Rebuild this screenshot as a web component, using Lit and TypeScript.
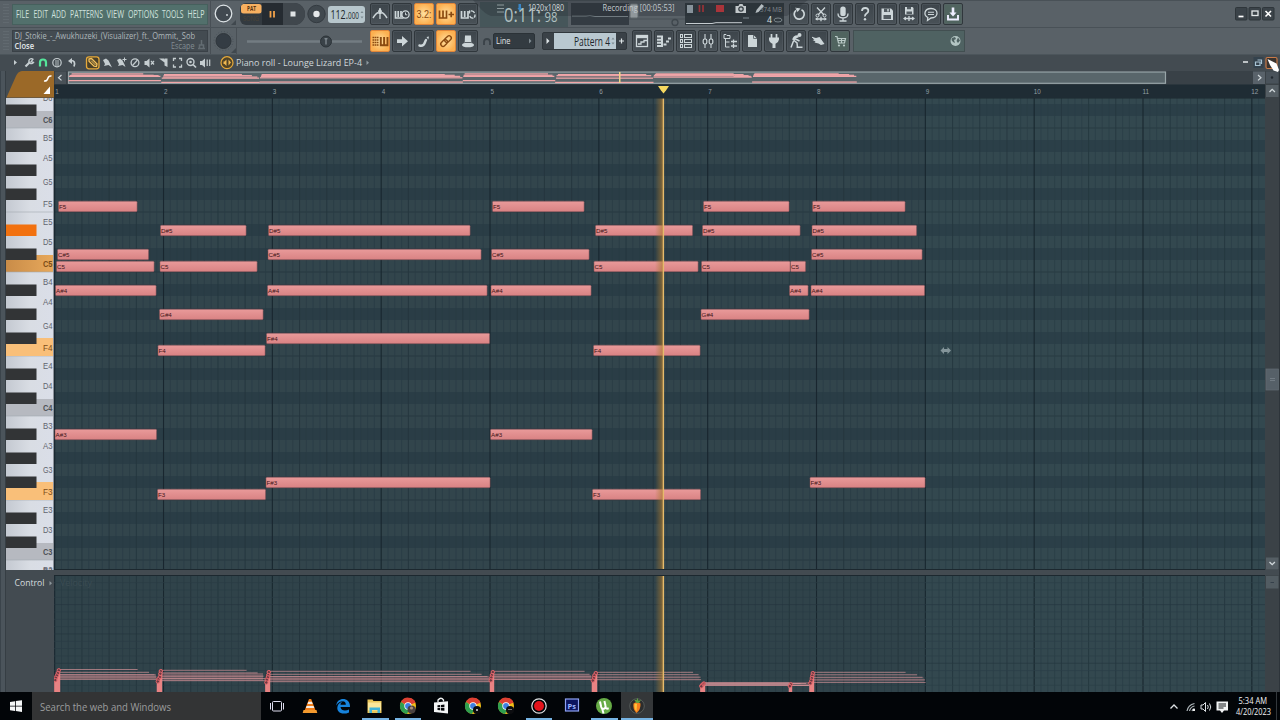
import { LitElement, html, svg, css } from "lit";
import { customElement } from "lit/decorators.js";

const BAR = 108.83;
const ORIGIN = 54.7;

type Note = { n: string; y: number; a: number; b: number; v: number };
const row = (n: string, y: number, spans: number[][]): Note[] => spans.map(([a, b, v]) => ({ n, y, a: a + 0.5, b: b + 0.6, v }));

const NOTES: Note[] = [
  ...row("F5", 206, [[58, 137, 669.5], [492, 584, 671.3], [703, 789, 682.7], [812, 905, 672.3]]),
  ...row("D#5", 230, [[160, 246, 670.3], [268, 470, 671.3], [595, 692.5, 672.3], [702, 800, 683.5], [811.5, 916.5, 674.8]]),
  ...row("C#5", 254, [[57, 148.5, 672.3], [267.5, 481, 674.3], [491, 589, 674.3], [811, 922, 677.3]]),
  ...row("C5", 266, [[56, 154, 674.7], [159.5, 257, 672.9], [593.5, 698, 674.7], [701, 790, 684.5], [790, 805.5, 683.5]]),
  ...row("A#4", 290, [[55, 156, 677], [267, 487, 676.5], [490.5, 591, 676.8], [789, 808, 685.3], [810.5, 924.5, 679.9]]),
  ...row("G#4", 314, [[159, 263, 676.2], [700.5, 809, 685.5]]),
  ...row("F#4", 338, [[266, 489.5, 679]]),
  ...row("F4", 350, [[157.5, 265, 678.5], [593, 700, 677.2]]),
  ...row("A#3", 434, [[54.5, 156.5, 679.3], [490, 592, 679.6]]),
  ...row("F#3", 482, [[265.5, 490, 681.7], [809.5, 925, 682.4]]),
  ...row("F3", 494, [[157, 265.5, 680.7], [592, 700.5, 679.7]]),
];

// Text squeezed or stretched to a known width, as the condensed toolbar faces are.
const fit = (t: string, x: number, y: number, w: number, size: number, fill: string, weight = 400) =>
  svg`<text x=${x} y=${y} font-size=${size} textLength=${w} lengthAdjust="spacingAndGlyphs" fill=${fill} font-weight=${weight}>${t}</text>`;

const W = "#cdd6d9";
const O = "#8a4a10";
const G: Record<string, unknown> = {
  metro: svg`<path d="M3 14q3-5 5.500-5.500M17 14q-3-5-5.500-5.500" fill="none" stroke=${W} stroke-width="1.500"/><path d="M10 4v11" stroke=${W} stroke-width="1.300"/><path d="M8 7l2-3 2 3-.5 3h-3z" fill=${W}/>`,
  wait: svg`<path d="M3.500 7v7h8M6.200 7v6M9 7v6" fill="none" stroke=${W} stroke-width="1.700"/><circle cx="13.500" cy="10.500" r="3.600" fill="#3a4147" stroke=${W} stroke-width="1.300"/><path d="M13.500 8.500v2.300h1.800" fill="none" stroke=${W}/>`,
  count: svg`${fit("3.2:", 2.5, 14, 15, 11, O)}`,
  blend: svg`<path d="M3.500 6.500v7.500h7V6.500M7 6.500v7M12.500 10.500h5.500M15.200 7.800v5.400" fill="none" stroke=${O} stroke-width="1.700"/>`,
  loop: svg`<path d="M3.500 7v7h6.500V7M6.700 7v6" fill="none" stroke=${W} stroke-width="1.700"/><path d="M16.500 9q-1-2.500-3.500-2M11.800 12q1 2.700 3.600 2M12 6.500q-.8 1-.4 3M17 10.500q.2 2-.8 3" fill="none" stroke=${W} stroke-width="1.400"/>`,
  keys: svg`<path d="M2.500 6.500h6.500M2.500 9h6.500M2.500 11.500h6.500M2.500 14h6.500" stroke=${O} stroke-width="1.500" stroke-dasharray="1.600 .5"/><path d="M10.800 6v8.200h6.700V6M14.100 6v8" fill="none" stroke=${O} stroke-width="1.900"/>`,
  arrow: svg`<path d="M5 8.300h5V5l6 5.200-6 5.200v-3.300H5z" fill=${W}/>`,
  slide: svg`<path d="M5.500 14.500c5 1 4.500-2 6.500-5.500" fill="none" stroke=${W} stroke-width="2.500" stroke-linecap="round"/><path d="M12.500 6l2.500-.5-.7 3z" fill=${W}/>`,
  link: svg`<g fill="none" stroke=${O} stroke-width="1.400" transform="rotate(-45 10 10)"><rect x="3.500" y="7.800" width="7.500" height="4.500" rx="2.200"/><rect x="9" y="7.800" width="7.500" height="4.500" rx="2.200"/></g>`,
  hat: svg`<ellipse cx="10" cy="14" rx="6" ry="2.300" fill=${W}/><path d="M7 4.500h6l.4 9H6.600z" fill=${W}/><path d="M6.800 11.500h6.500" stroke="#596167"/>`,
  undo: svg`<path d="M7 6.300a5 5 0 1 0 5.500-.6" fill="none" stroke=${W} stroke-width="1.700"/><path d="M6 3.500l5.500 1-3 3.500z" fill=${W}/>`,
  cut: svg`<path d="M6 3.500l7 7.500M14 3.500l-7 7.500M5 15h10M10 12.800v4.500" stroke=${W} stroke-width="1.300"/><circle cx="6.500" cy="11.500" r="1.500" fill="none" stroke=${W}/><circle cx="13.500" cy="11.500" r="1.500" fill="none" stroke=${W}/><path d="M4 15l2.500-1.700v3.400zM16 15l-2.500-1.700v3.400z" fill=${W}/>`,
  mic: svg`<rect x="7.300" y="2.500" width="5.400" height="9.500" rx="2.600" fill=${W}/><path d="M5 9.500q0 4.500 5 4.500t5-4.500M10 14v3M6.500 17h7" fill="none" stroke=${W} stroke-width="1.300"/>`,
  help: svg`<path d="M7 7q0-3 3.200-3T13.300 7q0 1.500-1.800 2.600T10 12.500" fill="none" stroke=${W} stroke-width="1.800"/><circle cx="10" cy="15.300" r="1.200" fill=${W}/>`,
  save: svg`<path d="M4.500 4.500h9.500l2 2v9.500h-11.500z" fill=${W}/><path d="M7 4.500h6v3.500H7zM6.500 11h7.500v4H6.500z" fill="#525b61"/><path d="M11 5v2.500" stroke=${W} stroke-width="1.500"/>`,
  saveas: svg`<path d="M6 3h7.500l1 1v6.500H6z" fill=${W}/><path d="M8 3h4v2.300H8zM7.500 7.500h5.500v2.500H7.500z" fill="#525b61"/><path d="M5 14.500h10M10 12v5" stroke=${W} stroke-width="1.300"/><path d="M4 14.500l3-2v4zM16 14.500l-3-2v4z" fill=${W}/>`,
  chat: svg`<path d="M10 4.500c8 0 8 9.500 0 9.500l-3.500 2.500.3-3C2 11 3.500 4.500 10 4.500z" fill="none" stroke=${W} stroke-width="1.300"/><path d="M7 8.300h6M7 10.500h6" stroke=${W} stroke-width="1.100"/>`,
  down: svg`<path d="M10 3.500v7" stroke="#eef" stroke-width="2.600"/><path d="M6.500 8.500h7L10 12.500z" fill="#eef"/><path d="M5 11v4.500h10V11" fill="none" stroke="#eef" stroke-width="1.900"/>`,
  playlist: svg`<rect x="4.500" y="4.500" width="11" height="11" fill="none" stroke=${W} stroke-width="1.300"/><path d="M4 6h12" stroke=${W} stroke-width="2.400"/><path d="M6 13h3v-2h3V9.500h3" fill="none" stroke=${W} stroke-width="1.300"/>`,
  roll: svg`<path d="M3 5.500h5v9.500H3M3 8.700h4.500M3 11.800h4.500" fill="none" stroke=${W} stroke-width="2"/><path d="M9.500 13.500h3M12 10.500h3M14 7.500h3" stroke=${W} stroke-width="2.200"/>`,
  rack: svg`<g fill="none" stroke=${W}><rect x="4.500" y="3.500" width="2" height="3"/><rect x="8.500" y="3.500" width="7" height="3"/><rect x="4.500" y="8.500" width="2" height="3"/><rect x="8.500" y="8.500" width="7" height="3"/><rect x="4.500" y="13.500" width="2" height="3"/><rect x="8.500" y="13.500" width="7" height="3"/></g>`,
  mixer: svg`<path d="M7 3v14M13 3v14" stroke=${W} stroke-width="1.100"/><rect x="5.200" y="8" width="3.600" height="5" rx="1.500" fill="#3a4147" stroke=${W} stroke-width="1.200"/><rect x="11.200" y="8" width="3.600" height="5" rx="1.500" fill="#3a4147" stroke=${W} stroke-width="1.200"/>`,
  tree: svg`<path d="M4 3.500h2l1 1h3v3H4zM5.500 8v8h4M5.500 11h4" fill="none" stroke=${W}/><path d="M11 10.500h6M11 15h6M13.500 8.500v4M13.500 13v4" stroke=${W} stroke-width="1.300"/>`,
  file: svg`<path d="M6 4h5.500l3.500 3.500V16H6z" fill=${W}/><path d="M11.500 4v3.500H15" fill="none" stroke="#6a7479"/>`,
  plug: svg`<path d="M7.500 3v4M12.500 3v4" stroke=${W} stroke-width="1.700"/><path d="M5 6.500h10v2q-.3 3-3.500 4.300v4.200h-3v-4.200Q5.300 11.500 5 8.500z" fill=${W}/>`,
  dig: svg`<circle cx="13.500" cy="4" r="2" fill=${W}/><path d="M12.500 5.500Q8 5 7.500 9" fill="none" stroke=${W} stroke-width="2.600"/><path d="M7.500 9l3.500 3 .5 4.500M7.500 10L5 16.500M8.500 7.500l5 2.500M10.500 16.300h6" fill="none" stroke=${W} stroke-width="1.500"/>`,
  tap: svg`<path d="M4 6l4 1 3.500-1 1.500 2 3.500 5-3.500 1-2.500-1.500-4-1 1-1L4.500 9l2-.5z" fill=${W}/><path d="M4 6l9 7" stroke=${W}/>`,
  cart: svg`<path d="M5 5.500h2l1.500 6.500h6l1-4.500H7.500M8 9.500h7M11.500 7v5" fill="none" stroke="#b9c9c6" stroke-width="1.200"/><circle cx="9" cy="14.500" r="1.100" fill="#b9c9c6"/><circle cx="14" cy="14.500" r="1.100" fill="#b9c9c6"/>`,
};

const btn = (k: string, mod = "") => html`<button class="btn ${mod}"><svg viewBox="0 0 20 20" width="20" height="20">${G[k]}</svg></button>`;

const chrome = (badge: unknown) => svg`<g>
  <circle cx="14" cy="14" r="8" fill="#f2c018"/><path d="M14 14L7 10A8 8 0 0 1 21.500 10.500z" fill="#dd4033"/><path d="M14 6a8 8 0 0 1 7.500 4.700H14z" fill="#dd4033"/>
  <path d="M7 10a8 8 0 0 0 6 12l3-6z" fill="#2f9e4f"/><circle cx="14" cy="14" r="3.700" fill="#fff"/><circle cx="14" cy="14" r="2.900" fill="#3f7fe0"/>${badge}</g>`;

const TASKS: { icon: unknown; open?: boolean; active?: boolean }[] = [
  { icon: svg`<rect x="9.500" y="9.500" width="9" height="9.500" rx="1" fill="none" stroke="#dde"/><path d="M7.500 11v6.500M20.500 11v6.500" stroke="#dde"/>` },
  { icon: svg`<path d="M13 7h2.200l4.200 11H8.800z" fill="#f07b16"/><path d="M12.300 9.800h3.600l.8 2.300h-5.200zM10.600 14h7l.7 2H9.900z" fill="#f4ede4"/><path d="M7.500 18h13l.8 3H6.700z" fill="#f39a2e"/>` },
  { icon: svg`<path d="M7.300 13.500C8 4.500 21.500 5 21 15H11.500c.3 4 5.500 4.300 8.500 2.400v3C13 23.500 7 20 8.500 14.500 9.500 11 12 10 14 9.500c-2 1-2.500 2-2.500 3.200h5.300C17 8 10.500 8 7.300 13.500z" fill="#1683dc"/>` },
  { icon: svg`<path d="M6.500 7.500h5l1 1.500h8v12h-14z" fill="#e9c65a"/><path d="M7 10.500h13v8H7z" fill="#fbe79a"/><path d="M8.500 21v-5.500h10.500V21h-2.500v-3h-5.500v3z" fill="#3fb3d8"/>`, open: true },
  { icon: chrome(svg`<circle cx="17.500" cy="17.500" r="4" fill="#4a4240"/><circle cx="17.500" cy="16" r="1.600" fill="#a98e7e"/>`), open: true },
  { icon: svg`<path d="M7 10.500l14-1.200v12.200L7 20z" fill="#f3f5f6"/><path d="M11 10V8q3-3.500 5.500 0v1.500" fill="none" stroke="#f3f5f6" stroke-width="1.300"/><path d="M10.500 13.200l2.700-.2v2.300h-2.700zM14 12.900l3.400-.3v2.700H14zM10.500 16h2.700v2.200l-2.700-.2zM14 16h3.400v2.700l-3.400-.3z" fill="#05070a"/>` },
  { icon: chrome(svg`<circle cx="18" cy="18" r="4" fill="#080a0c"/><circle cx="18" cy="18" r="1" fill="#ddd"/>`) },
  { icon: chrome(svg`<circle cx="18" cy="18" r="4" fill="#0c0d10"/><path d="M16 17.500h4" stroke="#777"/>`) },
  { icon: svg`<circle cx="14" cy="14" r="7.200" fill="none" stroke="#dfe2e4" stroke-width="1.200"/><circle cx="14" cy="14" r="5" fill="#e3131b"/>`, open: true },
  { icon: svg`<rect x="7.500" y="7" width="13" height="12" fill="#0c1560" stroke="#8ea2f2" stroke-width="1.200"/><text x="9.500" y="16.500" font-size="7.500" font-weight="700" fill="#9db8ff">Ps</text>` },
  { icon: svg`<circle cx="14" cy="14" r="8" fill="#66ab46"/><path d="M10 9.500l1.200 5.500q.8 2.500 3.300 1.500 1.600-1 .9-3.200l-1-4.300M15.500 15.500q1 1.700 3.200.8M12 16l1.500 5.500" fill="none" stroke="#fff" stroke-width="2"/>`, open: true },
  { icon: svg`<circle cx="14" cy="14" r="7.300" fill="#2b2d2d" stroke="#555b59"/><path d="M10.500 11.500q3.500-2.500 7 0 .5 6-4 9.500-4-4-3-9.500z" fill="#f5801d"/><path d="M11.500 12q1.500-1 2.500 0l-.5 7.500q-2.500-3-2-7.500z" fill="#ffc23a"/><path d="M13.500 11l-2.500-3.500 2.500.7 1-2.500 1 3 2.500-.7-2 3z" fill="#5da143"/>`, open: true, active: true },
];

@customElement("app-root")
export class AppRoot extends LitElement {
  static styles = css`
    :host { display: block; width: 1280px; height: 720px; overflow: hidden; font-family: "Open Sans", "Noto Sans", sans-serif; color: #d9e0e3; background: #434b51; }
    * { box-sizing: border-box; }
    svg { display: block; flex: none; }
    text { white-space: pre; }
    .app { display: flex; flex-direction: column; width: 1280px; height: 720px; position: relative; }
    .bar { display: flex; align-items: center; height: 27px; background: #596167; border-top: 1px solid #495157; flex: none; }
    .grip { width: 12px; height: 20px; flex: none; background: repeating-linear-gradient(#697278 0 1px, transparent 1px 3px) 3px 0 / 6px 100% no-repeat; opacity: .5; }
    .menu { width: 196px; height: 21px; background: #52706c; border: 1px solid #46605d; flex: none; }
    .hint { width: 196px; height: 22px; background: #434b51; border: 1px solid #3a4147; flex: none; }
    .bar .menu svg, .bar .hint svg { overflow: visible; }
    .knobbox { width: 27px; height: 26px; margin-left: 2px; border-left: 1px solid #484f55; border-right: 1px solid #484f55; flex: none; }
    .knobbox.open { border-right-color: transparent; }
    .transport { display: flex; width: 65px; height: 22px; margin-left: 3px; border-radius: 6px 11px 11px 6px; background: #333a40; overflow: hidden; flex: none; }
    .rec { width: 22px; flex: none; margin-left: 1px; }
    .tempo { width: 37px; height: 17px; border-radius: 3px; background: #b7c6cc; flex: none; }
    .btns { display: flex; gap: 2px; flex: none; margin-left: 5px; }
    .btns.second { margin-left: 3px; }
    .btn { width: 20px; height: 22px; padding: 0; border: 1px solid #30373c; border-radius: 2px; background: linear-gradient(#3d454b, #495157); display: flex; align-items: center; justify-content: center; box-shadow: 0 0 0 1px #59626866 inset; }
    .btn.on { background: radial-gradient(#ffe0a0, #fcb050 75%); border-color: #e0863a; box-shadow: none; }
    .btn.teal { background: #50645f; }
    .time { width: 88px; height: 25px; background: #46565a; flex: none; margin-left: 2px; }
    .scope { width: 58px; height: 22px; background: #343c43; flex: none; margin-left: 3px; }
    .cpu { width: 99px; height: 22px; background: #30383e; flex: none; }
    .win { margin-left: auto; margin-right: 5px; }
    .slider { flex: none; margin-left: 8px; }
    .snap { flex: none; margin-left: 2px; }
    .pat { display: flex; width: 85px; height: 18px; margin-left: 5px; background: #3a4147; border: 1px solid #30373c; border-radius: 2px; flex: none; }
    .news { width: 112px; height: 22px; margin-left: 3px; background: #4f6262; border: 1px solid #424f51; flex: none; }
    .overlay { position: absolute; left: 470px; top: 0; }
    .pointer { position: absolute; left: 1264px; top: 56px; }
    .title { display: flex; height: 17px; flex: none; background: #434b51; }
    .editor { display: flex; height: 621px; flex: none; }
    .edge { width: 6px; flex: none; background: #4b545b; border-right: 1px solid #363e44; border-left: 1px solid #3b444b; }
    .side { width: 48px; flex: none; display: flex; flex-direction: column; }
    .canvas { width: 1211px; flex: none; display: flex; flex-direction: column; }
    .rail { width: 15px; flex: none; display: flex; flex-direction: column; }
    .split { height: 5px; background: #434b51; flex: none; }
    .control { height: 117px; background: #434b51; flex: none; }
    .taskbar { display: flex; height: 28px; background: #020508; flex: none; }
    .start { width: 32px; display: flex; align-items: center; justify-content: center; }
    .search { width: 229px; background: #333435; }
    .task { width: 32.700px; display: flex; justify-content: center; position: relative; }
    .task.active { background: #343739; }
    .task.open::after { content: ""; position: absolute; left: 3px; right: 3px; bottom: 0; height: 2px; background: #76b4e4; }
    .task.active::after { left: 0; right: 0; }
    .tray { margin-left: auto; }
  `;

  private topBar() {
    const menus: [string, number, number][] = [["FILE", 3, 13], ["EDIT", 20.5, 14.500], ["ADD", 38.5, 14.500], ["PATTERNS", 57, 33], ["VIEW", 93.5, 17.500], ["OPTIONS", 115, 30.500], ["TOOLS", 149, 21.500], ["HELP", 174.5, 17]];
    return html`<div class="bar">
      <div class="grip"></div>
      <div class="menu"><svg width="194" height="19">${menus.map(([t, x, w]) => fit(t, x, 13.300, w, 11.500, "#cfe0dc"))}</svg></div>
      <div class="knobbox open"><svg width="26" height="26"><circle cx="12.500" cy="12.500" r="8.300" fill="#414950" stroke="#dce2e5" stroke-width="1.300"/><circle cx="16" cy="14" r=".9" fill="#dce2e5"/><path d="M25 19v5h-5z" fill="#40484e"/></svg></div>
      <div class="transport"><svg width="65" height="22">
        <rect x="1" y="1" width="20.500" height="9.500" rx="2.500" fill="#f8b060"/>${fit("PAT", 7, 8.2, 9, 6.500, "#5b3410", 700)}${fit("SONG", 3, 18, 16, 7, "#4b4438")}
        <rect x="22" width="21" height="22" fill="#252b31"/><path d="M30.500 8v6.500M34 8v6.500" stroke="#f3a24a" stroke-width="1.800"/><rect x="43" width="22" height="22" fill="#40474d"/><rect x="50.500" y="8.500" width="5" height="5" fill="#dfe3e5"/></svg></div>
      <svg class="rec" width="22" height="24"><circle cx="10.500" cy="12" r="8.700" fill="#40484e" stroke="#343b41"/><circle cx="10.500" cy="12" r="3.200" fill="#e5e8ea"/></svg>
      <div class="tempo"><svg width="37" height="17">${fit("112.", 2.5, 13, 17.5, 12, "#20262b")}${fit("000", 20, 13, 11, 8.500, "#20262b")}<path d="M32.500 7l1.500-2 1.500 2zM32.500 10.500l1.500 2 1.500-2z" fill="#7c8a90"/></svg></div>
      <div class="btns">${btn("metro")}${btn("wait")}${btn("count", "on")}${btn("blend", "on")}${btn("loop")}</div>
      <div class="time"></div>
      <div class="scope"><svg width="58" height="22"><path d="M1 13h14l4-.5 5 1h33" stroke="#707a80" fill="none"/></svg></div>
      <svg width="56" height="26"><path d="M0 18h56" stroke="#4a5258"/><circle cx="46" cy="21.500" r="3" fill="none" stroke="#3f474d" stroke-width="1.300"/></svg>
      <div class="cpu"><svg width="99" height="22"><path d="M1 20.500h26l4-.8h26" stroke="#c5ccd0" fill="none"/>${fit("374 MB", 75, 8.500, 22, 7.5, "#a9b2b6")}${fit("4", 82, 20, 5, 8.5, "#d9e0e3")}<path d="M58 15h6" stroke="#566067" stroke-width="2"/><ellipse cx="93" cy="17" rx="4" ry="2" fill="none" stroke="#7a858a"/></svg></div>
      <div class="btns">${["undo", "cut", "mic", "help", "save", "saveas", "chat"].map((k) => btn(k))}${btn("down", "teal")}</div>
      <div class="win"><svg width="40" height="14"><g fill="#3b4349" stroke="#2f363b"><rect x=".5" y=".5" width="11.500" height="12.500" rx="1"/><rect x="14" y=".5" width="11.500" height="12.500" rx="1"/><rect x="27.500" y=".5" width="11.500" height="12.500" rx="1"/></g><path d="M3.500 9.500h5" stroke="#fff" stroke-width="1.700"/><rect x="17" y="4" width="6" height="4.500" fill="none" stroke="#e4e8ea" stroke-width="1.300"/><path d="M30.500 4l5.500 5.500M36 4l-5.500 5.500" stroke="#fff" stroke-width="1.600"/></svg></div>
    </div>`;
  }

  private secondBar() {
    return html`<div class="bar">
      <div class="grip"></div>
      <div class="hint"><svg width="194" height="21">${fit("DJ_Stokie_-_Awukhuzeki_(Visualizer)_ft._Ommit,_Sob", 1.5, 7.500, 180.500, 8.3, "#aeb7bb")}${fit("Close", 1.5, 17.5, 19.5, 8.3, "#e4e9eb", 600)}${fit("Escape", 158, 17.5, 23.5, 8.3, "#828c91")}<path d="M185 17.500h7M186.500 17v-3h4v3M188.500 14V9" stroke="#636c72" fill="none" stroke-width="1.500"/></svg></div>
      <div class="knobbox"><svg width="26" height="26"><circle cx="12.500" cy="13" r="9.500" fill="none" stroke="#49525a" stroke-dasharray="1 2"/><circle cx="12.500" cy="13" r="7.500" fill="#343c44" stroke="#2f363c"/><path d="M25 20v5h-5z" fill="#40484e"/></svg></div>
      <svg class="slider" width="122" height="26"><path d="M2 13.500h115" stroke="#737c82" stroke-width="2.500"/><circle cx="81" cy="13.500" r="5.500" fill="#3a4248" stroke="#2c3338"/><path d="M79.500 10.700h3M81 10.500v6" stroke="#929ca2" stroke-width="1.100"/></svg>
      <div class="btns second">${btn("keys", "on")}${btn("arrow")}${btn("slide")}${btn("link", "on")}${btn("hat")}</div>
      <svg class="snap" width="57" height="24"><path d="M4 16v-3a3 3 0 0 1 6 0v3" fill="none" stroke="#3a4248" stroke-width="1.800"/><rect x="13.500" y="4.500" width="41" height="15" rx="1.500" fill="#333b41" stroke="#2b3237"/>${fit("Line", 16, 15, 14.5, 9, "#e0e5e7")}<path d="M49 9.500l2.500 2.500-2.500 2.500z" fill="#7f8a90"/></svg>
      <div class="pat"><svg width="83" height="16"><rect x="11" width="62" height="16" fill="#b9c8d0"/><path d="M3.500 5l3 3-3 3z" fill="#dfe5e8"/>${fit("Pattern 4", 31, 12.500, 36, 12, "#20262b")}<path d="M68.500 6.500l1.500-2 1.500 2zM68.500 9.500l1.500 2 1.500-2z" fill="#7c8a90"/><path d="M76 8h5M78.500 5.500v5" stroke="#dfe5e8" stroke-width="1.200"/></svg></div>
      <div class="btns">${["playlist", "roll", "rack", "mixer", "tree", "file", "plug", "dig", "tap"].map((k) => btn(k))}${btn("cart", "teal")}</div>
      <div class="news"><svg width="110" height="20"><circle cx="101.500" cy="10" r="5" fill="#b3c5c3"/><path d="M98 7l3-1 1 2-2 1 1 3-2-1-1.500-2zM104 6.500l2 3-2 2.500-1.500-2z" fill="#4f6262"/></svg></div>
    </div>`;
  }

  private overlay() {
    return html`<svg class="overlay" width="340" height="26">
      <path d="M3 0H338L326 9Q323 12 317 16H21Q14 13 10 8z" fill="#242c32" opacity=".32"/>
      <path d="M27 5h7M27 8.500h7M27 12h7" stroke="#8e9a9d"/><path d="M48.500 4h2.500v4h-2.500zM47.500 8h5l-2.500 4z" fill="#3985c5"/>
      ${fit("0:11:", 34, 21.5, 37, 20, "#b0c0c1")}${fit("98", 74.500, 21.500, 13, 14, "#b0c0c1")}
      ${fit("1920x1080", 58, 10.500, 36, 8.500, "#d5dadd")}
      <rect x="160" y="4" width="8" height="14" rx="1.500" fill="#90979b" stroke="#5e666b"/>
      ${fit("Recording [00:05:53]", 132.5, 11, 72, 8.500, "#c2c8cc")}
      <rect x="217" y="5" width="6" height="8" fill="#87929a"/><path d="M229.500 5v7M233 5v7" stroke="#993338" stroke-width="1.700"/><rect x="246" y="5" width="8" height="7" fill="#a9343a"/>
      <path d="M265.500 6h3l1-2h3l1 2h2.500v7h-10.500z" fill="#c2c8cb"/><circle cx="271" cy="9" r="2.200" fill="#b7bec2" stroke="#333b41" stroke-width="1.200"/><path d="M285.500 13l1-3 5-6 2.500 2-5.500 6z" fill="#b4bcc0"/>
    </svg>`;
  }

  private titleBar() {
    const s = "#c5cdd0";
    return html`<div class="title"><svg width="1280" height="17" viewBox="0 54 1280 17">
      <path d="M0 54.500h1280" stroke="#4c555b"/><path d="M14 60l3 2.500-3 2.500z" fill=${s}/>
      <path d="M25.500 66.500l4.500-4.500" stroke=${s} stroke-width="2.200"/><path d="M33 59.200a2.500 2.500 0 1 0 .5 3.200l-2.300-.8z" fill="none" stroke=${s} stroke-width="1.400"/>
      <path d="M40 66.500v-4a3 3 0 0 1 6 0v4" fill="none" stroke="#55e59b" stroke-width="2.200"/>
      <circle cx="57" cy="62.700" r="4.200" fill="none" stroke=${s} stroke-width="1.200"/><path d="M55 61h4M55 63h4M55 65h4" stroke=${s} stroke-width=".9"/>
      <path d="M71 60.500q5 0 3 6" fill="none" stroke=${s} stroke-width="1.700"/><path d="M68 61l4-3v6z" fill=${s}/>
      <rect x="86.500" y="56.800" width="12.500" height="12" rx="2.500" fill="#4a4028" stroke="#e6a93a" stroke-width="1.300"/><path d="M89 59l2.500-.5 5.500 5.500-.5 2.500-2.500-.3-5-5z" fill="none" stroke="#f4c05a" stroke-width="1.300"/><path d="M91 60.500l4.500 4.500" stroke="#f4c05a"/>
      <path d="M103 60l3-1.500 2.500 2 2 4 1.500 3-3.500-2.500-4.500 1 1-2z" fill=${s}/>
      <path d="M117 60l3-1.500 2.500 2 2 4 1 2.500-3-2-4.500 1 1-2zM124 57.500h1v1.500h1.500v1H125v1.500h-1V60h-1.500v-1h1.500z" fill=${s}/>
      <circle cx="135" cy="62.700" r="3.900" fill="none" stroke=${s} stroke-width="1.300"/><path d="M132.500 65.500l5-5.500" stroke=${s} stroke-width="1.200"/>
      <path d="M144.500 61h2l3-2.500v9l-3-2.500h-2z" fill=${s}/><path d="M151 61l3 3.500M154 61l-3 3.500" stroke=${s} stroke-width="1.200"/>
      <path d="M159 58.500h5l1.500 4-1-1v-3h3v8.500l-3-1.500v-3z" fill=${s}/>
      <path d="M173.500 61v-2.500h2.500M179 58.500h2.500V61M181.500 64.500V67H179M176 67h-2.500v-2.500" fill="none" stroke=${s} stroke-width="1.300"/>
      <circle cx="190.500" cy="62" r="3.500" fill="none" stroke=${s} stroke-width="1.400"/><path d="M193 64.500l3 3" stroke=${s} stroke-width="1.700"/><circle cx="190.500" cy="62" r="1.300" fill=${s}/>
      <path d="M200 61h2l3-2.500v9l-3-2.500h-2z" fill=${s}/><path d="M207.200 59.500v6.500M209.700 59.500v6.500" stroke=${s} stroke-width="1.200"/>
      <circle cx="227" cy="62.700" r="6" fill="#514325" stroke="#e6a93a" stroke-width="1.200"/><path d="M223.500 61.500h1l2-2v6.500l-2-2h-1zM228.500 59.500l2.500 3-2.500 3z" fill="#f0b850"/>
      ${fit("Piano roll - Lounge Lizard EP-4", 236, 66, 126, 9.8, "#d0d7da")}<path d="M366.500 60.500l2.500 2.200-2.500 2.200z" fill="#8f9aa0"/>
      <path d="M1243 62h5" stroke="#e6eaec" stroke-width="1.500"/><rect x="1253.500" y="57" width="10" height="11" fill="#34424d"/><path d="M1257.500 60h4v4M1255.500 62h4.500v3.500h-4.500z" fill="none" stroke="#a9c4d4" stroke-width="1.200"/>
      <rect x="1266" y="57.500" width="11" height="11" rx="1.500" fill="#3a3430" stroke="#c97a48" stroke-width="1.200"/></svg></div>`;
  }

  private keyboard() {
    const parts: unknown[] = [];
    const hi: Record<string, string> = { C5: "url(#kc)", F4: "#f9bf79", F3: "#f9bf79" };
    const labels: [string, number][] = [["B", 10], ["A", 30], ["G", 54], ["F", 76], ["E", 94], ["D", 114], ["C", 136]];
    for (let o = 0; o < 5; o++) {
      // Each octave spans 144px, the B row on top and the C row at the bottom.
      const b = 128 + 144 * (o - 1);
      const name = 6 - o;
      const c = b + 132;
      parts.push(svg`<path d="M6 ${c}H36V${c - 5}H54V${c + 12}H6z" fill=${hi[`C${name}`] ?? "#b6b9c0"}/><path d="M6 ${c + 12}H54M6 ${b + 84}H54" stroke="#a3a7ae" stroke-width=".6"/>`);
      const fk = `F${name}`;
      if (hi[fk]) parts.push(svg`<path d="M6 ${b + 72}H36V${b + 66}H54V${b + 84}H6z" fill=${hi[fk]}/>`);
      for (const k of [1, 3, 5, 8, 10]) {
        const hot = name === 5 && k === 8;
        parts.push(svg`<rect x="6" y=${b + 12 * k + 0.5} width="30.500" height="11.500" fill=${hot ? "#f2710f" : "#323436"}/>`);
      }
      for (const [l, d] of labels) {
        const isC = l === "C";
        parts.push(fit(`${l}${name}`, 43, b + d + 3, 9.500, 8.800, hi[`${l}${name}`] ? "#7c4c17" : isC ? "#4c5056" : "#61656e", isC ? 700 : 400));
      }
    }
    parts.push(fit("B2", 43, 573.5, 9.5, 8.800, "#61656e"));
    return html`<svg width="48" height="472" viewBox="6 98 48 472" font-family="Liberation Sans, sans-serif">
      <defs><linearGradient id="kc"><stop offset="0" stop-color="#c98c48"/><stop offset="1" stop-color="#e8a95c"/></linearGradient>
      <linearGradient id="kw"><stop offset="0" stop-color="#c4c9d1"/><stop offset=".5" stop-color="#d9dde4"/><stop offset="1" stop-color="#dadee8"/></linearGradient></defs>
      <rect x="6" y="98" width="48" height="472" fill="url(#kw)"/>${parts}<path d="M53.500 98v472" stroke="#8c929b"/></svg>`;
  }

  private verticals(y1: number, y2: number) {
    const out: unknown[] = [];
    for (let i = 0; i < 178; i++) {
      const x = ORIGIN + (i * BAR) / 16;
      const [c, w] = i % 16 === 0 ? ["#18272f", 1.1] : i % 4 === 0 ? ["#253840", 0.9] : ["#2a3e46", 0.7];
      out.push(svg`<path d="M${x} ${y1}V${y2}" stroke=${c} stroke-width=${w}/>`);
    }
    return out;
  }

  private playhead(y: number, h: number) {
    return svg`<defs><linearGradient id="ph"><stop offset="0" stop-color="#a87a30" stop-opacity="0"/><stop offset="1" stop-color="#ab7a30" stop-opacity=".7"/></linearGradient></defs>
      <rect x="655" y=${y} width="8" height=${h} fill="url(#ph)"/><rect x="662.700" y=${y} width="1.400" height=${h} fill="#e6bb6c"/>`;
  }

  private grid() {
    const rows: unknown[] = [];
    for (let y = 92; y < 570; y += 12) {
      const k = ((((y - 128) / 12) % 12) + 12) % 12;
      if ([1, 3, 5, 8, 10].includes(k)) rows.push(svg`<rect x="54" y=${y} width="1211" height="12" fill="#2b3f48"/>`);
      if (k === 0 || k === 7) rows.push(svg`<path d="M54 ${y}H1265" stroke="#273840" stroke-width=".8"/>`);
    }
    return html`<svg width="1211" height="472" viewBox="54 98 1211 472">
      <defs><linearGradient id="nt" x2="0" y2="1"><stop offset="0" stop-color="#e99a9a"/><stop offset="1" stop-color="#d98283"/></linearGradient></defs>
      <rect x="54" y="98" width="1211" height="472" fill="#33484f"/>${rows}${this.verticals(98, 570)}
      <rect x="54" y="98" width="871" height="472" fill="#222a33" opacity=".08"/>
      ${NOTES.map((n) => svg`<rect x=${n.a} y=${n.y - 4.8} width=${n.b - n.a - 0.5} height="10.500" rx="1" fill="url(#nt)" stroke="#7c4c52" stroke-width=".5"/><text x=${n.a + 0.6} y=${n.y + 2.8} font-size="6.200" font-family="Liberation Sans, sans-serif" fill="#3f1518">${n.n}</text>`)}
      ${this.playhead(98, 472)}
      <path d="M940.500 350.500l3.500-3.500v2h3.500v-2l3.500 3.500-3.500 3.500v-2H944v2z" fill="#84959a"/>
      <path d="M54 98H1265M54 569.500H1265" stroke="#1c282f"/></svg>`;
  }

  private velocity() {
    const h: unknown[] = [];
    for (let i = 0; i < 16; i++) h.push(svg`<path d="M54 ${575.3 + i * 7.33}H1265" stroke=${i % 4 === 0 ? "#253840" : "#2b3f47"} stroke-width=".7"/>`);
    const bands = [[58, 156, 674, 679.5], [160, 263, 673, 680.7], [268, 489, 676, 681.5], [492, 591, 675, 680], [595, 699, 676, 679.5], [703, 809, 682, 686], [812, 924, 677, 682]];
    return html`<svg width="1211" height="117" viewBox="54 575 1211 117">
      <rect x="54" y="575" width="1211" height="117" fill="#33484f"/>${this.verticals(575, 692)}${h}
      <rect x="54" y="575" width="871" height="117" fill="#222a33" opacity=".14"/>
      ${fit("Velocity", 60, 586, 32, 9.5, "#3b4c53")}
      ${bands.map(([a, b, t, u], i) => svg`<rect x=${a} y=${t} width=${b - a} height=${u - t} fill="#d98a90" opacity=${i < 4 || i === 5 ? 0.35 : 0.12}/>`)}
      ${NOTES.map((n) => svg`<path d="M${n.a} ${n.v}H${n.b}" stroke="#d9959b" stroke-width=".8" opacity=".85"/>`)}
      ${NOTES.map((n) => svg`<rect x=${n.a - 0.8} y=${n.v + 2} width="2.500" height=${690 - n.v} fill="#e98384"/>`)}
      ${NOTES.map((n) => svg`<circle cx=${n.a + 0.3} cy=${n.v + 0.8} r="1.700" fill="#6b3a42" stroke="#e4656b" stroke-width="1"/>`)}
      ${this.playhead(575, 117)}<path d="M54 575.500H1265" stroke="#1c282f"/></svg>`;
  }

  private head() {
    const mx = (x: number) => 68 + (x - 54.5) * 0.9055;
    return html`<svg width="1211" height="27" viewBox="54 71 1211 27">
      <rect x="54" y="71" width="1211" height="14" fill="#394147"/><rect x="55" y="71.500" width="11" height="12.500" fill="#495157"/><path d="M61.500 75l-3 2.700 3 2.700" fill="none" stroke="#d1d8db" stroke-width="1.200"/>
      <rect x="68.500" y="72" width="1097" height="11.300" fill="#59666b" stroke="#98a5a8" stroke-width="1.200"/>
      ${NOTES.map((n) => svg`<rect x=${mx(n.a)} y=${67.2 + n.y * 0.0295} width=${mx(n.b) - mx(n.a)} height="1.250" fill="#f0a5a8"/>`)}
      <rect x="619" y="72" width="1.500" height="11" fill="#efd38a"/>
      <rect x="1253" y="71.500" width="12" height="12.500" fill="#59626a"/><path d="M1258 75l3 2.700-3 2.700" fill="none" stroke="#d1d8db" stroke-width="1.200"/>
      <rect x="54" y="84.500" width="1211" height="14" fill="#1f2c34"/>
      ${Array.from({ length: 12 }, (_, i) => svg`<text x=${ORIGIN + i * BAR + (i > 8 ? -0.5 : 0.5)} y="94" font-size="6.300" font-family="Liberation Sans, sans-serif" fill="#939fa4">${i + 1}</text>`)}
      <path d="M658 86h11l-3 4.500-2.500 3-2.500-3z" fill="#f6d860"/></svg>`;
  }

  private rail() {
    return html`<svg width="15" height="621" viewBox="1265 71 15 621">
      <rect x="1265" y="71" width="15" height="621" fill="#3b4247"/><rect x="1266" y="71.500" width="12.500" height="12" fill="#49525a"/><circle cx="1272" cy="77.500" r="1.200" fill="#20282e"/>
      <rect x="1266" y="85" width="12.500" height="12" fill="#555e64"/><path d="M1269.500 92l2.700-2.700 2.700 2.700" fill="none" stroke="#d1d8db" stroke-width="1.300"/>
      <rect x="1266" y="369" width="12.500" height="21" fill="#566068" stroke="#626c73" stroke-width=".7"/><path d="M1270 378.500h5M1270 380.500h5" stroke="#78838a" stroke-width=".8"/>
      <rect x="1266" y="557.500" width="12.500" height="12" fill="#555e64"/><path d="M1269.500 562l2.700 2.700 2.700-2.700" fill="none" stroke="#d1d8db" stroke-width="1.300"/>
      <rect x="1265" y="570" width="15" height="5.500" fill="#434b51"/><rect x="1266" y="576" width="12.500" height="12.500" fill="#525c62"/><path d="M1270.500 582.500h3.500" stroke="#35404a"/>
      <path d="M1279.500 71v621" stroke="#2d343a"/></svg>`;
  }

  render() {
    return html`<div class="app">
      ${this.topBar()}${this.secondBar()}${this.overlay()}${this.titleBar()}
      <div class="editor">
        <div class="edge"></div>
        <div class="side">
          <svg width="48" height="27" viewBox="6 71 48 27"><rect x="6" y="71" width="48" height="27" fill="#434b51"/><path d="M22 71H54V97.500H6.500L16 76Q18 71.500 22 71z" fill="#9b6928"/><path d="M44 81q3 .5 3.800-2.500t3.700-2.500" fill="none" stroke="#fff" stroke-width="1.500"/><path d="M50 86.500V94H43.500z" fill="#fff"/></svg>
          ${this.keyboard()}
          <div class="split"></div>
          <div class="control"><svg width="48" height="30" viewBox="6 575 48 30">${fit("Control", 14.5, 586.300, 30, 9.800, "#d6dcdf")}<path d="M49.500 581l2.500 2.200-2.500 2.200z" fill="#8c969b"/></svg></div>
        </div>
        <div class="canvas">${this.head()}${this.grid()}<div class="split"></div>${this.velocity()}</div>
        <div class="rail">${this.rail()}</div>
      </div>
      <div class="taskbar">
        <div class="start"><svg width="14" height="14"><path d="M1 3l5-.8v4.500H1zM6.800 2.100L13 1.200v5.500H6.800zM1 7.500h5V12l-5-.8zM6.800 7.500H13V13l-6.200-.9z" fill="#f4f6f7"/></svg></div>
        <div class="search"><svg width="229" height="28">${fit("Search the web and Windows", 8, 18.700, 131, 10.800, "#9c9d9e")}</svg></div>
        ${TASKS.map((t) => html`<div class="task ${t.open ? "open" : ""} ${t.active ? "active" : ""}"><svg width="28" height="28">${t.icon}</svg></div>`)}
        <svg class="tray" width="120" height="28" viewBox="1160 692 120 28">
          <path d="M1170.500 708.500l3.500-3.500 3.500 3.500" fill="none" stroke="#dde2e5" stroke-width="1.300"/>
          <path d="M1187 711q1-6 7.500-7.500M1189.500 711q.8-4 5-5M1192 711q.5-2 2.500-2.500" fill="none" stroke="#aeb6ba" stroke-width="1.200"/><rect x="1193" y="709" width="2" height="2" fill="#eee"/>
          <path d="M1201 705h2l2.500-2.500v9L1203 709h-2zM1207.500 705q1.500 2 0 4M1209.500 703.500q2.500 3.500 0 7" fill="none" stroke="#dde2e5"/>
          <path d="M1216.500 701.500h11.500v9h-4l-2 2.500-2-2.500h-3.500z" fill="#f2f4f5"/><path d="M1218.500 704h7.500M1218.500 706h7.500M1218.500 708h5" stroke="#14181b"/>
          ${fit("5:34 AM", 1238.5, 703.8, 28.5, 8.3, "#f0f3f4")}${fit("4/20/2023", 1236, 715, 35, 8.3, "#f0f3f4")}
          <path d="M1276.500 692v28" stroke="#33383c"/></svg>
      </div>
      <svg class="pointer" width="16" height="18"><path d="M3.500 3l9 4.500L15 14l-1 2-4.500-1.500L6 9z" fill="#fff"/></svg>
    </div>`;
  }
}
